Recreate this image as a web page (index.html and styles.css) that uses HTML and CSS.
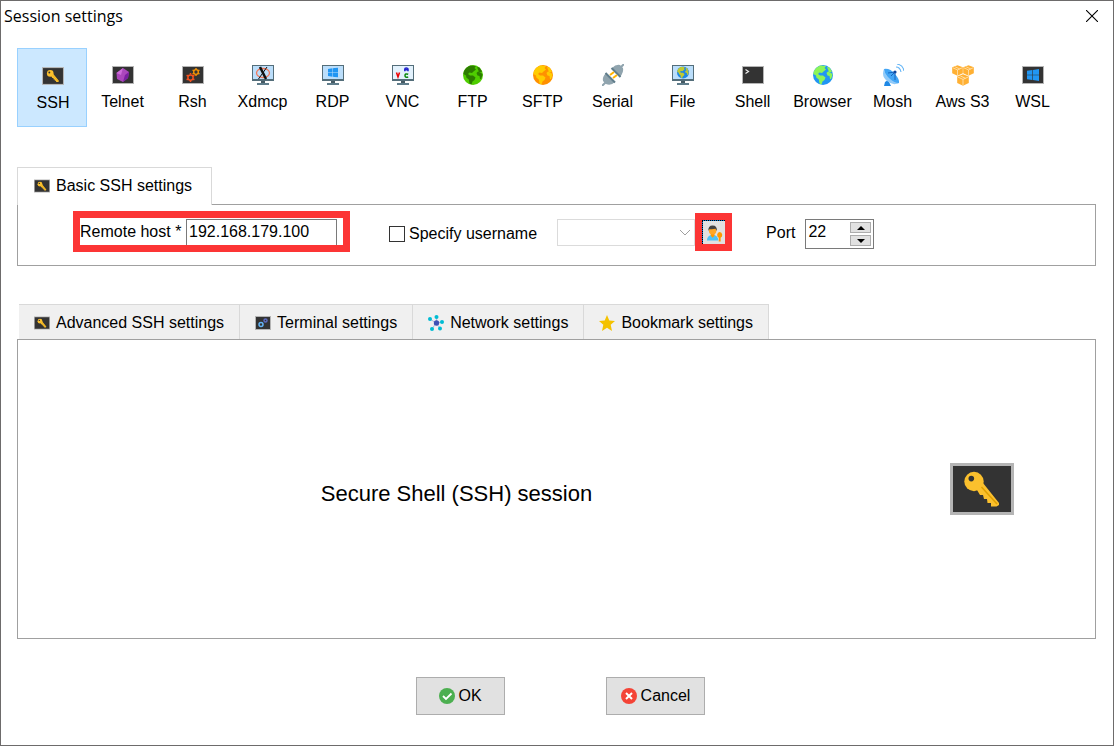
FILE: index.html
```html
<!DOCTYPE html>
<html lang="en">
<head>
    <meta charset="UTF-8">
    <meta name="viewport" content="width=device-width, initial-scale=1.0">
    <title>Session settings</title>
    <link rel="stylesheet" href="styles.css">
</head>
<body>

<!-- Shared icon shapes -->
<svg class="sprite" aria-hidden="true">
    <symbol id="screen" viewBox="0 0 22 18">
        <path fill="#b5b5b5" d="M0 0h22v18H0z"/>
        <path fill="#333" d="M1 1h20v16H1z"/>
    </symbol>
    <symbol id="small-screen" viewBox="0 0 16 14">
        <path fill="#b5b5b5" d="M0 0h16v14H0z"/>
        <path fill="#333" d="M1 1h14v12H1z"/>
    </symbol>
    <symbol id="monitor" viewBox="0 0 22 20">
        <path fill="#455a64" d="M9 15h4v3h-4z"/>
        <path fill="#607d8b" d="M5 18h12v2H5z"/>
        <path fill="#546e7a" d="M0 0h22v16H0z"/>
        <path fill="#bbdefb" d="M1 1h20v13H1z"/>
    </symbol>
    <symbol id="key" viewBox="0 0 64 52">
        <path fill="#b5b5b5" d="M0 0h64v52H0z"/>
        <path fill="#333" d="M3 3h58v46H3z"/>
        <path fill="#fbc02d" d="M33 20l16 20v2l-2.500 1.500H41V40h-3.500l-.5-4h-3l-1-4h-3l-3-5z"/>
        <circle cx="24" cy="18.500" r="9.700" fill="#fbc02d"/>
        <path stroke="#e0a000" stroke-width="1.500" fill="none" d="M31.500 24L47 41"/>
        <circle cx="21.300" cy="15.600" r="2.800" fill="#333"/>
    </symbol>
    <symbol id="gear" viewBox="0 0 12 12">
        <circle cx="6" cy="6" r="3.500" fill="none" stroke="currentColor" stroke-width="2"/>
        <path stroke="currentColor" stroke-width="2" d="M6 0v2M6 10v2M.8 3l1.800 1M9.400 8l1.800 1M.8 9l1.800-1M9.400 4l1.800-1"/>
    </symbol>
    <symbol id="windows" viewBox="0 0 12 12">
        <path fill="currentColor" d="M0 1.800l5.400-.8v4.700H0zM6 .9L12 0v5.700H6zM0 6.300h5.400V11L0 10.200zM6 6.300h6V12l-6-.9z"/>
    </symbol>
    <symbol id="land" viewBox="0 0 20 20">
        <path fill="currentColor" d="M.8 6.500C2 3.500 4.500 1.500 7.500.5L13 1l-1.500 2L13 4.500l-2.500 2L9 8 6.500 7.500 5 9l2 1.500h3l2.500 2-1 2.500-2 1.500L8.500 19.500l-2-1-.7-4-2.500-2L3 10.500.3 9zM14 2l2.500.5 2.500 4-1.500.8-2.500-.8-1.500 1.500 1 2.500 2 .5.500 3L18 14l1-2.500.5-2.500L18 8l-2-1z"/>
    </symbol>
    <symbol id="cube" viewBox="0 0 12 12">
        <path fill="#ffb033" d="M6 .2l5.800 2.300v6.600L6 11.800.2 9.100V2.500z"/>
        <path fill="none" stroke="#fff0d4" stroke-width=".7" d="M.8 3L6 5.400 11.200 3M6 5.400v6M3.400 2l5 2.300"/>
    </symbol>
</svg>

<main class="window">
    <header class="titlebar">
        <h1 class="title">Session settings</h1>
        <button class="close" type="button" aria-label="Close">
            <svg viewBox="0 0 12 12" width="12" height="12"><path d="M0 0l12 12M12 0L0 12" stroke="#000" stroke-width="1.100"/></svg>
        </button>
    </header>

    <nav class="types" aria-label="Session type">
        <button class="type active" type="button">
            <svg class="type-icon" viewBox="0 0 22 22"><use href="#key" y="2" width="22" height="18"/></svg>
            SSH
        </button>
        <button class="type" type="button">
            <svg class="type-icon" viewBox="0 0 22 22">
                <use href="#screen" y="2" width="22" height="18"/>
                <path fill="#ab47bc" d="M11 4l6 4-1 6-5 4-6-3-.5-6z"/>
                <path fill="#ce6bdc" d="M11 4L9 11l-4.500-2z"/>
                <path fill="#7b1fa2" d="M17 8l-1 6-5 4 2-7z"/>
            </svg>
            Telnet
        </button>
        <button class="type" type="button">
            <svg class="type-icon" viewBox="0 0 22 22">
                <use href="#screen" y="2" width="22" height="18"/>
                <use href="#gear" class="orange" x="10" y="4" width="8" height="8"/>
                <use href="#gear" class="red" x="4" y="9" width="9" height="9"/>
            </svg>
            Rsh
        </button>
        <button class="type" type="button">
            <svg class="type-icon" viewBox="0 0 22 22">
                <use href="#monitor" y="1" width="22" height="20"/>
                <ellipse cx="11" cy="9" rx="6.500" ry="4.500" fill="none" stroke="#f2795c" stroke-width="1.300"/>
                <path stroke="#111" stroke-width="2.500" d="M8 3l6 12"/>
                <path stroke="#111" d="M15 3L6.500 15"/>
            </svg>
            Xdmcp
        </button>
        <button class="type" type="button">
            <svg class="type-icon" viewBox="0 0 22 22">
                <use href="#monitor" y="1" width="22" height="20"/>
                <use href="#windows" class="blue" x="6" y="3.500" width="10" height="10"/>
            </svg>
            RDP
        </button>
        <button class="type" type="button">
            <svg class="type-icon" viewBox="0 0 22 22">
                <use href="#monitor" y="1" width="22" height="20"/>
                <path fill="#e3f2fd" d="M1 2h20v13H1z"/>
                <g fill="none" stroke-width="1.500">
                    <path stroke="#e00" d="M4.500 8.500L6 13 7.500 8.500"/>
                    <path stroke="#22c" d="M12.800 7.200V5q0-1 1.500-1T16 5v2.200M13 5.800h3"/>
                    <path stroke="#0a8a0a" d="M16.200 10.300q-3.200-1.200-3.200 1.200t3.200 1.500"/>
                </g>
            </svg>
            VNC
        </button>
        <button class="type" type="button">
            <svg class="type-icon" viewBox="0 0 22 22">
                <circle cx="11" cy="11" r="10" fill="#4fce00"/>
                <use href="#land" class="dark-green" x="1" y="1" width="20" height="20"/>
            </svg>
            FTP
        </button>
        <button class="type" type="button">
            <svg class="type-icon" viewBox="0 0 22 22">
                <circle cx="11" cy="11" r="10" fill="#ff9100"/>
                <use href="#land" class="yellow" x="1" y="1" width="20" height="20"/>
            </svg>
            SFTP
        </button>
        <button class="type" type="button">
            <svg class="type-icon" viewBox="0 0 22 22">
                <path stroke="#90a4ae" stroke-width="2" d="M0 22l4-4M22 0l-4 4"/>
                <path fill="#90a4ae" d="M10 4q4-4 8-3l3 3q1 4-3 9zM4 9l9 9q-4 4-9 2l-3-3q-1-4 3-8z"/>
                <path stroke="#607d8b" stroke-width="2" d="M9.500 4l9 9M3.500 9l9.500 9.500"/>
                <path stroke="#ffb300" stroke-width="2" d="M8 11l4-3M11 14l4-3"/>
            </svg>
            Serial
        </button>
        <button class="type" type="button">
            <svg class="type-icon" viewBox="0 0 22 22">
                <use href="#monitor" y="1" width="22" height="20"/>
                <circle cx="11" cy="8.500" r="6" fill="#1e88e5"/>
                <use href="#land" class="lime" x="5" y="2.500" width="12" height="12"/>
            </svg>
            File
        </button>
        <button class="type" type="button">
            <svg class="type-icon" viewBox="0 0 22 22">
                <use href="#screen" y="2" width="22" height="18"/>
                <path d="M3.500 5.500L6.500 7.500l-3 2" fill="none" stroke="#eee" stroke-width="1.200"/>
            </svg>
            Shell
        </button>
        <button class="type" type="button">
            <svg class="type-icon" viewBox="0 0 22 22">
                <circle cx="11" cy="11" r="10" fill="#2196f3"/>
                <use href="#land" class="light-green" x="1" y="1" width="20" height="20"/>
            </svg>
            Browser
        </button>
        <button class="type" type="button">
            <svg class="type-icon" viewBox="0 0 22 22">
                <path fill="#1e88e5" d="M3 18l3-2 3 6H2z"/>
                <path fill="#42a5f5" d="M2 5Q8 4 13 10t4 9q-5 1-10-4T2 5z"/>
                <path fill="#90caf9" d="M2 5q-3 7 3 12t12 2q-5 0-10-5T2 5z"/>
                <path stroke="#1565c0" fill="none" d="M6 9l7-1v8M13 8l-4 4"/>
                <circle cx="13" cy="8" r="1.600" fill="#0d47a1"/>
                <path stroke="#64b5f6" fill="none" stroke-width="1.100" d="M14 3q4 0 5 5M15 0q6 1 7 7"/>
            </svg>
            Mosh
        </button>
        <button class="type" type="button">
            <svg class="type-icon" viewBox="0 0 22 22">
                <use href="#cube" y="1" width="11" height="11"/>
                <use href="#cube" x="11" y="1" width="11" height="11"/>
                <use href="#cube" x="5" y="10" width="12" height="12"/>
            </svg>
            Aws S3
        </button>
        <button class="type" type="button">
            <svg class="type-icon" viewBox="0 0 22 22">
                <use href="#screen" y="2" width="22" height="18"/>
                <use href="#windows" class="blue" x="5" y="5" width="12" height="12"/>
            </svg>
            WSL
        </button>
    </nav>

    <section class="basic">
        <h2 class="basic-tab">
            <svg class="tab-icon" viewBox="0 0 16 16"><use href="#key" y="1" width="16" height="14"/></svg>
            Basic SSH settings
        </h2>
        <div class="basic-panel">
            <div class="host marked">
                <label for="host">Remote host *</label>
                <input class="host-input" id="host" type="text" value="192.168.179.100">
            </div>
            <label class="specify"><input class="check" type="checkbox">Specify username</label>
            <div class="user">
                <select class="user-select" aria-label="Username" disabled>
                    <option></option>
                </select>
                <svg class="arrow" viewBox="0 0 10 6"><path d="M0 0l5 5 5-5" fill="none" stroke="#a0a0a0"/></svg>
            </div>
            <button class="user-button marked" type="button" aria-label="Manage users">
                <svg class="user-icon" viewBox="0 0 18 18">
                    <path fill="#4fc3f7" d="M1 17q0-6 6-6t6 6z"/>
                    <path fill="#ff9800" d="M5 9h4v3l-2 2-2-2z"/>
                    <circle cx="7" cy="6.500" r="4" fill="#ffa726"/>
                    <path fill="#424242" d="M2.500 7Q2 1 7 1t4.500 6L10 4.500 6 5 3.500 5z"/>
                    <path fill="#ff9800" d="M14.500 8a3.200 3.200 0 0 1 1 6V18h-2v-4a3.200 3.200 0 0 1 1-6z"/>
                </svg>
            </button>
            <label class="port-label" for="port">Port</label>
            <div class="port">
                <input class="port-input" id="port" type="text" value="22">
                <div class="spin">
                    <button type="button" aria-label="Increase port"><svg viewBox="0 0 8 4" width="8" height="4"><path d="M0 4l4-4 4 4z"/></svg></button>
                    <button type="button" aria-label="Decrease port"><svg viewBox="0 0 8 4" width="8" height="4"><path d="M0 0l4 4 4-4z"/></svg></button>
                </div>
            </div>
        </div>
    </section>

    <section class="details">
        <div class="tabs">
            <button class="tab" type="button">
                <svg class="tab-icon" viewBox="0 0 16 16"><use href="#key" y="1" width="16" height="14"/></svg>
                Advanced SSH settings
            </button>
            <button class="tab" type="button">
                <svg class="tab-icon" viewBox="0 0 16 16">
                    <use href="#small-screen" y="1" width="16" height="14"/>
                    <circle cx="10.500" cy="5.500" r="1.500" fill="none" stroke="#5c6bc0" stroke-width="1.500"/>
                    <circle cx="6" cy="9.500" r="2" fill="none" stroke="#64b5f6" stroke-width="1.500"/>
                </svg>
                Terminal settings
            </button>
            <button class="tab" type="button">
                <svg class="tab-icon" viewBox="0 0 16 16">
                    <path stroke="#b0b6dd" d="M8 8L2 4M8 8l1-6M8 8l6-1M8 8l-4 6M8 8l4 5"/>
                    <circle cx="8.500" cy="8" r="2.700" fill="#3f51b5"/>
                    <g fill="#00bcd4">
                        <circle cx="2" cy="4" r="2"/>
                        <circle cx="8.500" cy="2" r="2"/>
                        <circle cx="14" cy="7" r="2"/>
                        <circle cx="4" cy="14" r="2"/>
                        <circle cx="12" cy="13.500" r="2"/>
                    </g>
                </svg>
                Network settings
            </button>
            <button class="tab" type="button">
                <svg class="tab-icon" viewBox="0 0 16 16"><path fill="#f4c200" d="M8 0l2.300 5.400 5.700.5-4.300 3.900L13 16l-5-3.200L3 16l1.300-6.200L0 5.900l5.700-.5z"/></svg>
                Bookmark settings
            </button>
        </div>
        <div class="details-panel">
            <p class="session-name">Secure Shell (SSH) session</p>
            <svg class="session-icon" viewBox="0 0 64 52"><use href="#key" width="64" height="52"/></svg>
        </div>
    </section>

    <footer class="actions">
        <button class="action" type="button">
            <svg viewBox="0 0 16 16" width="16" height="16"><circle cx="8" cy="8" r="8" fill="#4caf50"/><path d="M4 8l3 3 5.500-5.500" fill="none" stroke="#fff" stroke-width="1.800"/></svg>
            OK
        </button>
        <button class="action" type="button">
            <svg viewBox="0 0 16 16" width="16" height="16"><circle cx="8" cy="8" r="8" fill="#f44336"/><path d="M5 5l6 6M11 5l-6 6" stroke="#fff" stroke-width="2"/></svg>
            Cancel
        </button>
    </footer>
</main>

</body>
</html>
```
FILE: styles.css
```css
* {
    box-sizing: border-box;
}

body {
    margin: 0;
    font-family: "Liberation Sans", Arial, sans-serif;
    font-size: 16px;
    line-height: 20px;
    color: #000;
    background-color: #fff;
}

button, input, select {
    font: inherit;
    color: inherit;
    margin: 0;
    padding: 0;
    border-radius: 0;
}

svg {
    display: block;
    flex: none;
}

.sprite {
    position: absolute;
    width: 0;
    height: 0;
}

.window {
    display: flex;
    flex-direction: column;
    min-height: 100vh;
    padding: 0 17px 30px 16px;
    border: 1px solid #6d6b6b;
}

/* Title bar */
.titlebar {
    display: flex;
    align-items: center;
    justify-content: space-between;
    height: 30px;
    margin: 0 -3px 17px -13px;
}

.title {
    margin: 0;
    font-family: "Open Sans", "Noto Sans", sans-serif;
    font-size: 16px;
    font-weight: normal;
}

.close {
    padding: 0 1px;
    border: none;
    background: none;
}

/* Session types */
.types {
    display: flex;
    margin-bottom: 40px;
}

.type {
    display: flex;
    flex-direction: column;
    align-items: center;
    gap: 6px;
    width: 70px;
    height: 79px;
    padding: 15px 0 0 1px;
    border: 1px solid transparent;
    background: none;
    white-space: nowrap;
}

.type.active {
    padding: 16px 0 0 2px;
    border-color: #99d1ff;
    background-color: #cce8ff;
}

.type-icon {
    width: 22px;
    height: 22px;
}

.orange { color: #ff9800; }
.red { color: #f4511e; }
.blue { color: #2196f3; }
.dark-green { color: #2d7d00; }
.yellow { color: #ffcc00; }
.lime { color: #c0ca33; }
.light-green { color: #8cf558; }

/* Basic settings */
.basic {
    margin-bottom: 38px;
}

.basic-tab {
    position: relative;
    display: flex;
    align-items: center;
    gap: 6px;
    width: fit-content;
    height: 38px;
    margin: 0 0 -1px;
    padding: 0 19px 2px 16px;
    border: 1px solid #d9d9d9;
    border-bottom: none;
    background-color: #fff;
    font-size: 16px;
    font-weight: normal;
}

.tab-icon {
    width: 16px;
    height: 16px;
}

.basic-panel {
    display: flex;
    align-items: flex-start;
    height: 62px;
    padding: 6px 0 0 55px;
    border: 1px solid #a0a0a0;
}

.marked {
    border: 7px solid #fc3535;
}

.host {
    display: flex;
    width: 277px;
    height: 41px;
    padding: 1px 6px 0 0;
}

.host label {
    flex: 1;
    line-height: 25px;
    white-space: nowrap;
}

.host-input {
    width: 151px;
    padding: 0 2px 2px;
    border: 1px solid #7a7a7a;
    border-bottom: none;
    outline: none;
}

.specify {
    display: flex;
    align-items: center;
    gap: 4px;
    margin: 13px 20px 0 39px;
}

.check {
    appearance: none;
    width: 16px;
    height: 16px;
    border: 1px solid #333;
    background-color: #fff;
}

.user {
    position: relative;
    width: 138px;
    height: 27px;
    margin-top: 8px;
}

.user-select {
    appearance: none;
    width: 100%;
    height: 100%;
    border: 1px solid #ccc;
    background-color: #fff;
}

.arrow {
    position: absolute;
    top: 11px;
    right: 5px;
    width: 10px;
    height: 6px;
    pointer-events: none;
}

.user-button {
    display: flex;
    width: 37px;
    height: 38px;
    margin-top: 2px;
    background-color: #e1e1e1;
    box-shadow: inset 1px 1px #0078d7;
}

.user-icon {
    width: 100%;
    height: 100%;
    padding: 3px 2px 2px 3px;
    border: 1px dotted #000;
    border-width: 1px 0 0 1px;
}

.port-label {
    margin: 12px 10px 0 34px;
}

.port {
    display: flex;
    justify-content: space-between;
    width: 69px;
    height: 30px;
    margin-top: 8px;
    padding: 2px;
    border: 1px solid #7a7a7a;
}

.port-input {
    width: 40px;
    height: 20px;
    border: none;
    outline: none;
}

.spin {
    display: flex;
    flex-direction: column;
    gap: 2px;
    width: 21px;
}

.spin button {
    display: flex;
    flex: 1;
    align-items: center;
    justify-content: center;
    border: 1px solid #adadad;
    background-color: #e1e1e1;
}

/* Detail tabs */
.details {
    display: flex;
    flex: 1;
    flex-direction: column;
}

.tabs {
    display: flex;
    padding-left: 2px;
}

.tab {
    display: flex;
    align-items: center;
    gap: 6px;
    height: 35px;
    padding: 1px 15px 0;
    border: none;
    border-top: 1px solid #d9d9d9;
    border-right: 1px solid #d9d9d9;
    background-color: #f0f0f0;
    white-space: nowrap;
}

.details-panel {
    display: grid;
    grid-template-columns: 1fr 226px;
    flex: 1;
    align-items: center;
    min-height: 120px;
    border: 1px solid #a0a0a0;
}

.session-name {
    margin: 0;
    padding: 10px 0 0 26px;
    font-size: 22px;
    line-height: 28px;
    text-align: center;
}

.session-icon {
    width: 64px;
    height: 52px;
    justify-self: center;
}

/* Buttons */
.actions {
    display: flex;
    justify-content: center;
    gap: 101px;
    margin-top: 38px;
    padding-left: 8px;
}

.action {
    display: flex;
    align-items: center;
    justify-content: center;
    gap: 4px;
    min-width: 89px;
    height: 38px;
    padding: 0 14px;
    border: 1px solid #adadad;
    background-color: #e1e1e1;
}
```
